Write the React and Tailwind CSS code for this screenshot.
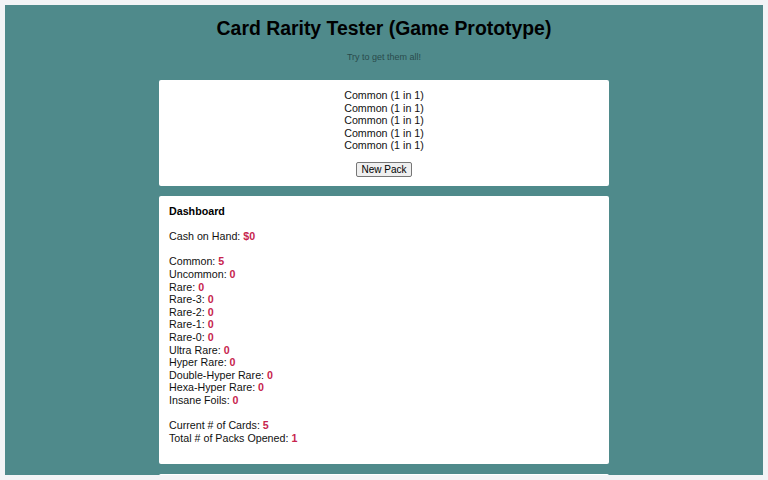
import React from "react";

const rarities = [
  ["Common", 5],
  ["Uncommon", 0],
  ["Rare", 0],
  ["Rare-3", 0],
  ["Rare-2", 0],
  ["Rare-1", 0],
  ["Rare-0", 0],
  ["Ultra Rare", 0],
  ["Hyper Rare", 0],
  ["Double-Hyper Rare", 0],
  ["Hexa-Hyper Rare", 0],
  ["Insane Foils", 0],
];

const pack = ["Common", "Common", "Common", "Common", "Common"];

function Val({ children }) {
  return <span className="font-bold text-[#c7254e]">{children}</span>;
}

export default function App() {
  return (
    <div className="h-screen bg-[#f3f4f6] p-[5px] font-['Liberation_Sans',Arial,sans-serif]">
      <div className="h-full overflow-hidden bg-[#4f8a8b] pt-[11px]">
        <h1 className="text-center text-[19.4px] leading-[24px] font-bold text-black">
          Card Rarity Tester (Game Prototype)
        </h1>
        <p className="mt-[11px] text-center text-[9px] leading-[12px] text-[#2a4a4b]">
          Try to get them all!
        </p>

        <div className="mx-auto mt-[17px] flex w-[450px] flex-col gap-[10px]">
          {/* pack */}
          <div className="rounded-[2px] bg-white pt-[9px] pb-[9px] text-center text-[10.7px] leading-[12.6px] text-[#111]">
            {pack.map((r, i) => (
              <div key={i}>{r} (1 in 1)</div>
            ))}
            <button className="mt-[10px] rounded-[2px] border border-[#767676] bg-[#efefef] px-[4px] text-[10px] leading-[13px] text-black">
              New Pack
            </button>
          </div>

          {/* dashboard */}
          <div className="rounded-[2px] bg-white px-[10px] pt-[9px] pb-[7px] text-[10.7px] leading-[12.6px] text-[#111]">
            <p className="mb-[12.6px] font-bold text-black">Dashboard</p>
            <p className="mb-[12.6px]">
              Cash on Hand: <Val>$0</Val>
            </p>
            <div className="mb-[12.6px]">
              {rarities.map(([name, n]) => (
                <div key={name}>
                  {name}: <Val>{n}</Val>
                </div>
              ))}
            </div>
            <div className="mb-[12.6px]">
              <div>
                Current # of Cards: <Val>5</Val>
              </div>
              <div>
                Total # of Packs Opened: <Val>1</Val>
              </div>
            </div>
          </div>

          <div className="h-[60px] rounded-[2px] bg-white" />
        </div>
      </div>
    </div>
  );
}
